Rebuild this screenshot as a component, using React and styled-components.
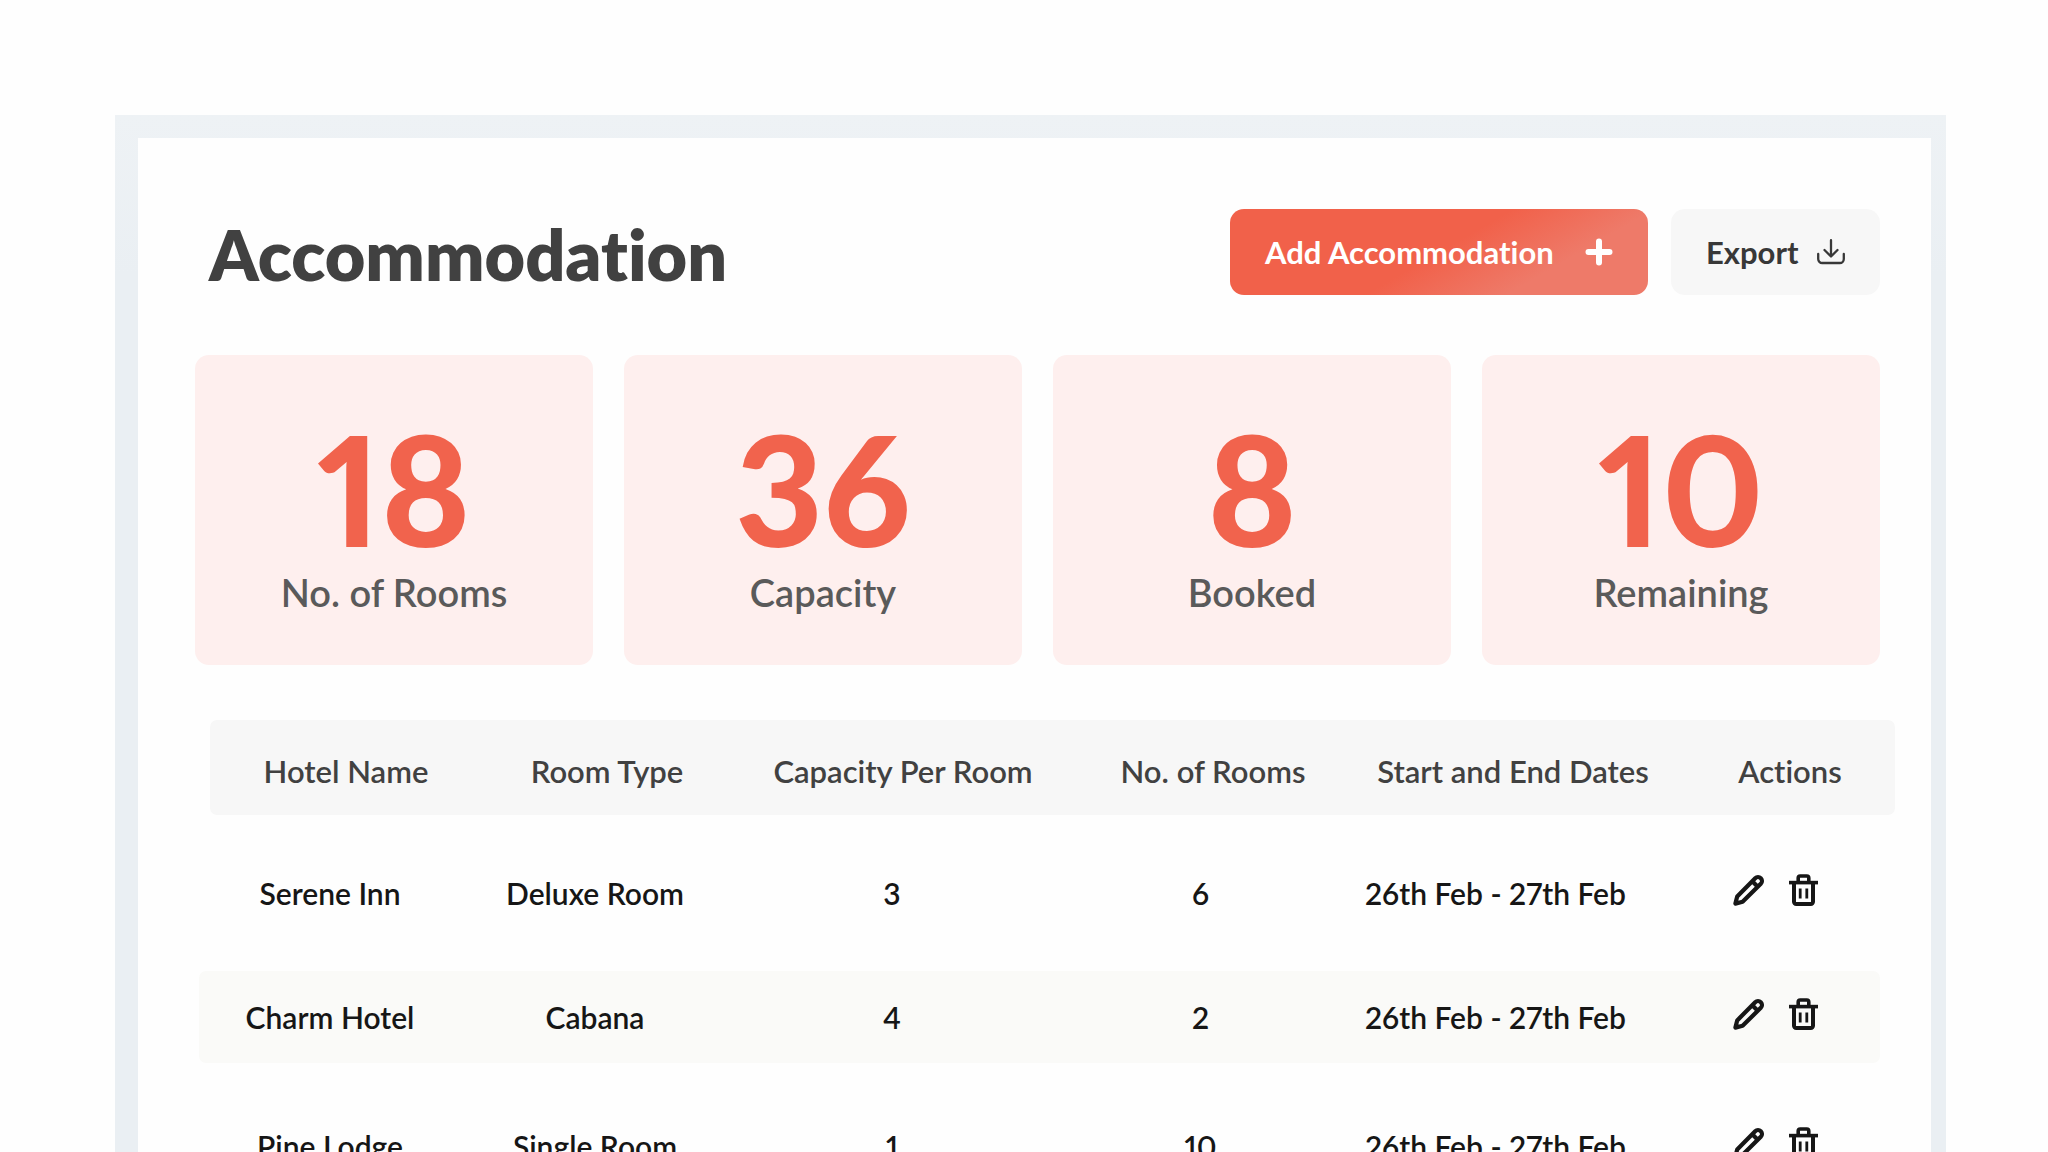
import styled, { createGlobalStyle } from 'styled-components';

const GlobalStyle = createGlobalStyle`
* {
  box-sizing: border-box;
}
body {
  margin: 0;
  background: #fefefe;
  font-family: Lato, "Open Sans", sans-serif;
  font-variant-ligatures: none;
}
`

const Page = styled.div`
  height: 100vh;
  padding: 115px 102px 0 115px;
  overflow: hidden;
`

const Frame = styled.div`
  padding: 23px 15px 0 23px;
  background: linear-gradient(#eef2f5, #eaeff3 160px);
`

const Panel = styled.main`
  padding: 71px 51px 60px 57px;
  background: #fefefe;
`

const Header = styled.header`
  display: flex;
  align-items: center;
  justify-content: space-between;
  padding-left: 14px;
`

const Title = styled.h1`
  margin: 0;
  padding-top: 4px;
  font-size: 70px;
  line-height: 82px;
  font-weight: 800;
  color: #414141;
`

const Buttons = styled.div`
  display: flex;
  gap: 23px;
`

const Button = styled.button`
  display: flex;
  align-items: center;
  justify-content: space-between;
  width: ${(props) => (props.$primary ? '418px' : '209px')};
  height: 86px;
  padding: 0 35px;
  border: none;
  border-radius: 14px;
  background: ${(props) =>
    props.$primary
      ? 'linear-gradient(150deg, #f1614a 0%, #f1614a 50%, #ee7a69 75%, #ee7a69 100%)'
      : '#f7f7f7'};
  color: ${(props) => (props.$primary ? '#ffffff' : '#383838')};
  font-family: inherit;
  font-size: 31px;
  font-weight: 700;
  font-variant-ligatures: none;
  white-space: nowrap;
  cursor: pointer;
`

const Cards = styled.section`
  display: grid;
  grid-template-columns: repeat(4, 1fr);
  gap: 31px;
  margin-top: 60px;
`

const Card = styled.div`
  height: 310px;
  padding-top: 63px;
  border-radius: 14px;
  background: #feefee;
  text-align: center;
`

const Count = styled.div`
  font-size: 152px;
  line-height: 140px;
  font-weight: 900;
  font-variant-numeric: proportional-nums;
  color: #f1634d;
`

const Label = styled.div`
  margin-top: 12px;
  font-size: 38px;
  line-height: 44px;
  font-weight: 600;
  color: #5a5a5a;
`

const Table = styled.table`
  display: block;
  margin-top: 55px;
`

const Head = styled.thead`
  display: block;
  margin-left: 15px;
  margin-right: -15px;
`

const Body = styled.tbody`
  display: block;
  margin-left: 4px;
`

const HeadRow = styled.tr`
  display: grid;
  grid-template-columns: 272fr 250fr 342fr 278fr 322fr 221fr;
  align-items: center;
  height: 95px;
  padding-top: 6px;
  border-radius: 7px;
  background: #f7f7f7;
`

const Row = styled.tr`
  display: grid;
  grid-template-columns: 262fr 268fr 326fr 291fr 299fr 235fr;
  align-items: center;
  height: 92px;
  margin-top: 32px;
  border-radius: 7px;

  &:nth-child(even) {
    background: #fafaf8;
  }
  &:last-child {
    height: 102px;
  }
`

const HeadCell = styled.th`
  min-width: 0;
  padding: 0;
  font-size: 31px;
  line-height: 36px;
  font-weight: 600;
  color: #414141;
  text-align: center;
  white-space: nowrap;

  &:last-child {
    padding-left: 11px;
  }
`

const Cell = styled.td`
  min-width: 0;
  padding: 0;
  font-size: 30px;
  line-height: 36px;
  font-weight: 600;
  font-variant-numeric: proportional-nums;
  color: #161616;
  text-align: center;
  white-space: nowrap;
`

const ActionCell = styled(Cell)`
  display: flex;
  justify-content: center;
  gap: 24px;
  padding-left: 26px;
  padding-bottom: 6px;
`

const IconButton = styled.button`
  display: flex;
  padding: 0;
  border: none;
  background: none;
  color: #161616;
  cursor: pointer;
`

const PlusIcon = () => (
  <svg width="28" height="28" viewBox="0 0 28 28" fill="none" stroke="currentColor" strokeWidth="6" strokeLinecap="round">
    <path d="M14 3.5v21M3.5 14h21" />
  </svg>
)

const DownloadIcon = () => (
  <svg width="28" height="26" viewBox="0 0 28 26" fill="none" stroke="currentColor" strokeWidth="2.3" strokeLinecap="round" strokeLinejoin="round">
    <path d="M14 1.2v16M7.5 11l6.5 6.5 6.5-6.5" />
    <path d="M1.2 15v5a4 4 0 0 0 4 4h17.6a4 4 0 0 0 4-4v-5" />
  </svg>
)

const PencilIcon = () => (
  <svg width="32" height="32" viewBox="0 0 32 32" fill="none" stroke="currentColor" strokeWidth="4.2" strokeLinejoin="round">
    <path d="M2.4 29.6l1.8-7.2L22.2 4.2a3.9 3.9 0 0 1 5.6 5.6L9.6 27.8z" />
    <path d="M19.2 7.2l5.6 5.6" />
  </svg>
)

const TrashIcon = () => (
  <svg width="29" height="32" viewBox="0 0 29 32" fill="none" stroke="currentColor" strokeWidth="4" strokeLinejoin="round">
    <path d="M0 8.6h29" strokeWidth="3.6" />
    <path d="M9.2 8V4a2 2 0 0 1 2-2h6.6a2 2 0 0 1 2 2v4" strokeWidth="3.6" />
    <path d="M5 9v18.8a2.2 2.2 0 0 0 2.2 2.2h14.6a2.2 2.2 0 0 0 2.2-2.2V9" />
    <path d="M11.2 14.5v10M17.8 14.5v10" strokeWidth="2.8" />
  </svg>
)

const stats = [
  { count: 18, label: 'No. of Rooms' },
  { count: 36, label: 'Capacity' },
  { count: 8, label: 'Booked' },
  { count: 10, label: 'Remaining' },
]

const columns = ['Hotel Name', 'Room Type', 'Capacity Per Room', 'No. of Rooms', 'Start and End Dates', 'Actions']

const hotels = [
  { name: 'Serene Inn', type: 'Deluxe Room', capacity: 3, rooms: 6, dates: '26th Feb - 27th Feb' },
  { name: 'Charm Hotel', type: 'Cabana', capacity: 4, rooms: 2, dates: '26th Feb - 27th Feb' },
  { name: 'Pine Lodge', type: 'Single Room', capacity: 1, rooms: 10, dates: '26th Feb - 27th Feb' },
]

const App = () => {
  return (
    <Page>
      <GlobalStyle />
      <Frame>
        <Panel>
          <Header>
            <Title>Accommodation</Title>
            <Buttons>
              <Button $primary>
                Add Accommodation
                <PlusIcon />
              </Button>
              <Button>
                Export
                <DownloadIcon />
              </Button>
            </Buttons>
          </Header>

          <Cards>
            {stats.map((stat) => (
              <Card key={stat.label}>
                <Count>{stat.count}</Count>
                <Label>{stat.label}</Label>
              </Card>
            ))}
          </Cards>

          <Table>
            <Head>
              <HeadRow>
                {columns.map((column) => (
                  <HeadCell key={column}>{column}</HeadCell>
                ))}
              </HeadRow>
            </Head>
            <Body>
              {hotels.map((hotel) => (
                <Row key={hotel.name}>
                  <Cell>{hotel.name}</Cell>
                  <Cell>{hotel.type}</Cell>
                  <Cell>{hotel.capacity}</Cell>
                  <Cell>{hotel.rooms}</Cell>
                  <Cell>{hotel.dates}</Cell>
                  <ActionCell>
                    <IconButton aria-label="Edit"><PencilIcon /></IconButton>
                    <IconButton aria-label="Delete"><TrashIcon /></IconButton>
                  </ActionCell>
                </Row>
              ))}
            </Body>
          </Table>
        </Panel>
      </Frame>
    </Page>
  )
}

export default App;
